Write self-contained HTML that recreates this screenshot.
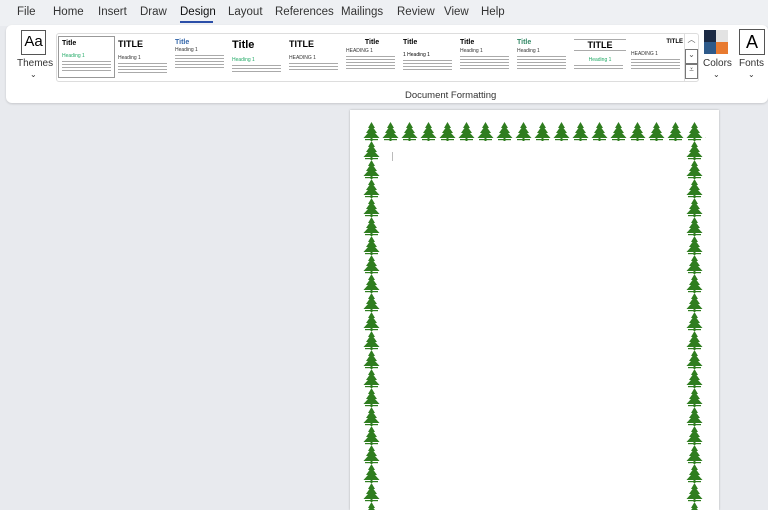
<!DOCTYPE html><html><head><style>
body{margin:0;width:768px;height:510px;overflow:hidden;background:#e8eaee;font-family:"Liberation Sans",sans-serif;position:relative}
.menu{position:absolute;top:0;left:0;width:768px;height:26px;background:#eef0f3}
.menu span{position:absolute;top:6px;font-size:11.5px;color:#333}
.rib{position:absolute;left:6px;top:25px;width:762px;height:78px;background:#fff;border-radius:6px;box-shadow:0 1px 2px rgba(0,0,0,.15)}
.gal{position:absolute;left:56px;top:33px;width:641px;height:47px;border:1px solid #ddd;border-radius:3px;background:#fff}
.it{position:absolute;top:2px;width:55px;height:42px;overflow:hidden}
.it b{display:block;font-size:7px;margin:3px 0 0 3px}
.it i{display:block;font-style:normal;font-size:5px;color:#2a6;margin:6px 0 2px 3px}
.ln{height:1px;background:#aaa;margin:2px 3px}
.lbl{position:absolute;font-size:10px;color:#333}
.page{position:absolute;left:350px;top:110px;width:369px;height:400px;background:#fff;box-shadow:0 0 2px rgba(0,0,0,.25)}
</style></head><body>
<div class="menu">
<span style="left:17px">File</span><span style="left:53px">Home</span><span style="left:98px">Insert</span><span style="left:140px">Draw</span><span style="left:180px;color:#111">Design</span><span style="left:228px">Layout</span><span style="left:275px">References</span><span style="left:341px">Mailings</span><span style="left:397px">Review</span><span style="left:444px">View</span><span style="left:481px">Help</span>
<div style="position:absolute;left:180px;top:21px;width:33px;height:2px;background:#2b4ea8"></div>
</div>
<div class="rib">
<div style="position:absolute;left:15px;top:5px;width:23px;height:23px;border:1px solid #555;font-size:15px;text-align:center;line-height:22px">Aa</div>
<div class="lbl" style="left:11px;top:33px">Themes</div><div class="lbl" style="left:24px;top:45px;font-size:8px">⌄</div>
<div class="lbl" style="left:399px;top:65px;font-size:9.5px">Document Formatting</div>
<div style="position:absolute;left:698px;top:5px;width:12px;height:12px;background:#1c2a44"></div>
<div style="position:absolute;left:710px;top:5px;width:12px;height:12px;background:#e3e3e3"></div>
<div style="position:absolute;left:698px;top:17px;width:12px;height:12px;background:#2e5a8a"></div>
<div style="position:absolute;left:710px;top:17px;width:12px;height:12px;background:#e87a30"></div>
<div class="lbl" style="left:697px;top:33px">Colors</div><div class="lbl" style="left:707px;top:45px;font-size:8px">⌄</div>
<div style="position:absolute;left:733px;top:4px;width:24px;height:24px;border:1px solid #555;font-size:18px;text-align:center;line-height:24px">A</div>
<div class="lbl" style="left:733px;top:33px">Fonts</div><div class="lbl" style="left:742px;top:45px;font-size:8px">⌄</div>
</div>
<div class="gal">
<div class="it" style="left:1px;border:1px solid #999;height:40px"><b>Title</b><i>Heading 1</i><div class="ln"></div><div class="ln"></div><div class="ln"></div><div class="ln"></div></div>
<div class="it" style="left:58px"><b style="font-size:9px">TITLE</b><i style="color:#333">Heading 1</i><div class="ln"></div><div class="ln"></div><div class="ln"></div><div class="ln"></div></div>
<div class="it" style="left:115px"><b style="color:#36a">Title</b><i style="color:#333;margin-top:1px">Heading 1</i><div class="ln"></div><div class="ln"></div><div class="ln"></div><div class="ln"></div><div class="ln"></div></div>
<div class="it" style="left:172px"><b style="font-size:11px">Title</b><i>Heading 1</i><div class="ln"></div><div class="ln"></div><div class="ln"></div></div>
<div class="it" style="left:229px"><b style="font-size:9px">TITLE</b><i style="color:#333">HEADING 1</i><div class="ln"></div><div class="ln"></div><div class="ln"></div></div>
<div class="it" style="left:286px"><b style="text-align:center">Title</b><i style="color:#333;margin-top:2px">HEADING 1</i><div class="ln"></div><div class="ln"></div><div class="ln"></div><div class="ln"></div><div class="ln"></div></div>
<div class="it" style="left:343px"><b>Title</b><i style="color:#000">1 Heading 1</i><div class="ln"></div><div class="ln"></div><div class="ln"></div><div class="ln"></div></div>
<div class="it" style="left:400px"><b>Title</b><i style="color:#333;margin-top:2px">Heading 1</i><div class="ln"></div><div class="ln"></div><div class="ln"></div><div class="ln"></div><div class="ln"></div></div>
<div class="it" style="left:457px"><b style="color:#386">Title</b><i style="color:#333;margin-top:2px">Heading 1</i><div class="ln"></div><div class="ln"></div><div class="ln"></div><div class="ln"></div><div class="ln"></div></div>
<div class="it" style="left:514px"><b style="font-size:9px;text-align:center;border-top:1px solid #aaa;border-bottom:1px solid #aaa">TITLE</b><i style="text-align:center">Heading 1</i><div class="ln"></div><div class="ln"></div></div>
<div class="it" style="left:571px"><b style="text-align:right;font-size:6px">TITLE</b><i style="color:#333">HEADING 1</i><div class="ln"></div><div class="ln"></div><div class="ln"></div><div class="ln"></div></div>
<div style="position:absolute;left:627px;top:0;width:13px;height:47px;border-left:1px solid #ddd;font-size:8px;text-align:center;color:#555"><div style="height:15px">︿</div><div style="border:1px solid #777;height:13px">⌄</div><div style="border:1px solid #777;height:13px">⩡</div></div>
</div>
<div class="page">
<svg width="369" height="400" style="position:absolute;left:0;top:0">
<defs>
<g id="t"><path fill="#2f7d1f" d="M9.5 0 L13 6 L11.5 6 L15 11 L13 11 L17.5 16 L1.5 16 L6 11 L4 11 L7.5 6 L6 6Z"/><rect x="8.5" y="15" width="2" height="4" fill="#2f7d1f"/><rect x="3" y="17" width="13" height="1.2" fill="#2f7d1f"/></g>
<pattern id="ph" width="19" height="19" patternUnits="userSpaceOnUse" x="12" y="12"><use href="#t"/></pattern>
</defs>
<rect x="12" y="12" width="344" height="19" fill="url(#ph)"/>
<rect x="12" y="31" width="19" height="380" fill="url(#ph)"/>
<rect x="335" y="31" width="19" height="380" fill="url(#ph)" transform="translate(0,0)"/>
<rect x="42" y="42" width="1" height="9" fill="#bbb"/>
</svg>
</div>
</body></html>
